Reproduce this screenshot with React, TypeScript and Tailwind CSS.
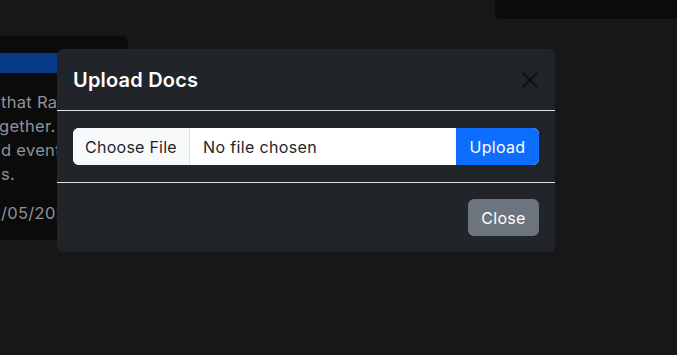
import React from "react";

export default function App() {
  const font = { fontFamily: "Inter, 'Noto Sans', sans-serif" };
  return (
    <div className="relative h-[355px] w-[677px] overflow-hidden bg-[#171717]" style={font}>
      {/* background content (dimmed) */}
      <div className="flex justify-end">
        <div className="h-[19px] w-[182px] rounded-bl-[6px] bg-[#0b0b0b]" />
      </div>
      <div className="mt-[17px] h-[204px] w-[128px] overflow-hidden rounded-tr-[6px] bg-[#0b0b0b]">
        <div className="mt-[17px] h-[20px] bg-[#073a86]" />
        <div className="whitespace-nowrap pl-[1px] pt-[17px] text-[16.5px] leading-[24px] tracking-[0.3px] text-[#8f9296]">
          <div>that Ralph</div>
          <div className="-ml-[2px]">gether. The</div>
          <div>d events</div>
          <div>s.</div>
          <div className="mt-[15px]">/05/2023</div>
        </div>
      </div>

      {/* modal */}
      <div className="absolute left-[57px] top-[49px] w-[498px] rounded-[6px] bg-[#212529] text-white">
        <div className="flex h-[62px] items-center justify-between border-b border-[#dee2e6] px-4">
          <h5 className="text-[20px] font-semibold leading-[30px] tracking-[0.2px] text-white">Upload Docs</h5>
          <svg width="16" height="16" viewBox="0 0 16 16" className="mr-[1px]">
            <path d="M1.5 1.5 L14.5 14.5 M14.5 1.5 L1.5 14.5" stroke="#0f1113" strokeWidth="1.8" strokeLinecap="round" />
          </svg>
        </div>
        <div className="border-b border-[#dee2e6] px-4 pb-[17px] pt-[17px]">
          <div className="flex h-[37px] overflow-hidden rounded-[6px] bg-white text-[16px] text-[#212529]">
            <div className="flex w-[117px] items-center justify-center border-r border-[#dee2e6] bg-[#f8f9fa] tracking-[0.25px]">
              Choose File
            </div>
            <div className="flex flex-1 items-center pl-[13px] tracking-[0.35px]">No file chosen</div>
            <div className="flex w-[83px] items-center justify-center bg-[#0d6efd] tracking-[0.3px] text-white">
              Upload
            </div>
          </div>
        </div>
        <div className="flex justify-end p-4">
          <div className="flex h-[37px] w-[71px] items-center justify-center rounded-[6px] bg-[#6c757d] text-[16px] tracking-[0.3px] text-white">
            Close
          </div>
        </div>
      </div>
    </div>
  );
}
